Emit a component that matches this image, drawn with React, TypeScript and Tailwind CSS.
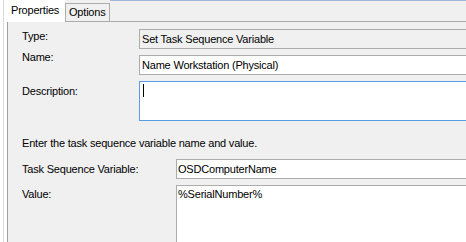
export default function App() {
  return (
    <div className="w-[466px] h-[242px] overflow-hidden bg-white text-black font-['Liberation_Sans',Arial,sans-serif] text-[11px] leading-[13px] tracking-[-0.2px]">
      {/* Tab strip */}
      <div className="flex h-[22px] w-[600px]">
        <div className="w-[3px] bg-white" />
        <div className="w-[62px] h-[22px] border-l border-[#d9d9d9] bg-white pl-[7px] pt-[4px]">Properties</div>
        <div className="bg-[#f0f0f0] pt-[3px]">
          <div className="w-[45px] h-[19px] border border-[#acacac] bg-[#f0f0f0] pl-[3px] pt-[2px]">Options</div>
        </div>
        <div className="flex-1 h-[22px] border-t border-b border-t-[#9fb7d9] border-b-[#acacac] bg-[#f0f0f0]" />
      </div>
      {/* Body */}
      <div className="flex h-[220px] w-[600px]">
        <div className="w-[3px] bg-white" />
        <div className="w-[4px] border-l border-[#d9d9d9] bg-white" />
        <div className="flex-1 border-l border-[#a0a0a0] bg-[#f0f0f0] pl-[14px] flex flex-col">
          <div className="mt-[7px] flex">
            <div className="w-[117px] mt-[1px]">Type:</div>
            <div className="flex-1 h-[20px] border border-[#acacac] bg-[#f0f0f0] flex items-center pl-[2px]">Set Task Sequence Variable</div>
          </div>
          <div className="mt-[6px] flex">
            <div className="w-[117px] -mt-[4px]">Name:</div>
            <div className="flex-1 h-[20px] border border-[#acacac] bg-white flex items-center pl-[2px]">Name Workstation (Physical)</div>
          </div>
          <div className="mt-[6px] flex">
            <div className="w-[117px] mt-[4px]">Description:</div>
            <div className="relative flex-1 h-[40px] border border-[#569de5] bg-white">
              <div className="absolute left-[3px] top-[2px] w-px h-[13px] bg-black" />
            </div>
          </div>
          <div className="mt-[6px] -ml-[3px] h-px bg-[#a0a0a0]" />
          <div className="mt-[10px]">Enter the task sequence variable name and value.</div>
          <div className="mt-[9px] flex">
            <div className="w-[154px] mt-[4px]">Task Sequence Variable:</div>
            <div className="flex-1 h-[20px] border border-[#acacac] bg-white flex items-center pl-[1px]">OSDComputerName</div>
          </div>
          <div className="mt-[6px] flex">
            <div className="w-[154px] mt-[3px]">Value:</div>
            <div className="flex-1 h-[80px] border border-[#acacac] bg-white pl-[1px] pt-[2px]">%SerialNumber%</div>
          </div>
        </div>
      </div>
    </div>
  );
}
